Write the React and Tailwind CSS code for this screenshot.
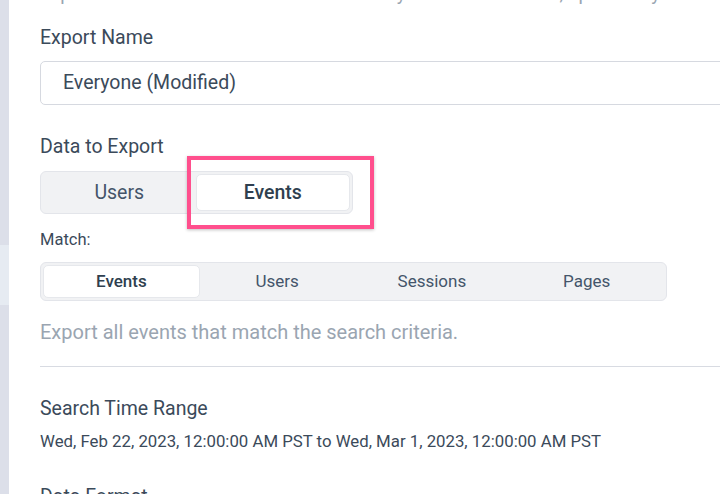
import React from "react";

const font = { fontFamily: "Roboto, 'Liberation Sans', sans-serif" };

function Segment({ items, active, className, itemClass }) {
  return (
    <div className={"flex rounded-md border border-[#e3e5ea] bg-[#f1f2f4] p-[2px] " + className}>
      {items.map((it) => (
        <div
          key={it}
          className={
            "flex flex-1 items-center justify-center rounded-[5px] " +
            itemClass +
            (it === active
              ? " bg-white font-medium text-[#2f3f4f] border border-[#e6e8ec]"
              : " text-[#44556a]")
          }
        >
          {it}
        </div>
      ))}
    </div>
  );
}

export default function App() {
  return (
    <div className="flex h-[494px] w-[720px] overflow-hidden bg-white" style={font}>
      {/* left rail */}
      <div className="flex w-[9px] shrink-0 flex-col bg-[#dcdfe9]">
        <div className="h-[245px]" />
        <div className="h-[60px] bg-[#e6ebf2]" />
      </div>

      <div className="flex-1 pl-[31px] text-[#3b4a5a]">
        <p className="-mt-[18px] whitespace-nowrap text-[19px] leading-[24px] text-[#9aa5b1]">
          Export a list of events or users that match your current search, up to a day or a week of data.
        </p>

        <div className="mt-[20px] text-[19.5px] leading-[24px]">Export Name</div>
        <div className="mt-[11px] -mr-4 flex h-[44px] items-center rounded-[5px] border border-[#d6d9e0] pl-[22px] text-[19.5px] text-[#3b4a5a]">
          Everyone (Modified)
        </div>

        <div className="mt-[30px] text-[19.5px] leading-[24px]">Data to Export</div>
        <div className="relative mt-[12px] w-[313px]">
          <Segment
            items={["Users", "Events"]}
            active="Events"
            className="h-[43px]"
            itemClass="text-[19.5px]"
          />
          <div className="pointer-events-none absolute left-[147px] top-[-15px] h-[73px] w-[187px] border-[4px] border-[#ff4f8d] shadow-[0_1px_3px_rgba(0,0,0,0.25)]" />
        </div>

        <div className="mt-[16px] text-[16.5px] leading-[20px]">Match:</div>
        <Segment
          items={["Events", "Users", "Sessions", "Pages"]}
          active="Events"
          className="mt-[12px] h-[39px] w-[627px]"
          itemClass="text-[17px]"
        />

        <div className="mt-[19px] text-[20px] leading-[24px] text-[#9aa5b1]">
          Export all events that match the search criteria.
        </div>

        <div className="mt-[22px] h-px bg-[#d8dbe2]" />

        <div className="mt-[30px] text-[19.5px] leading-[24px]">Search Time Range</div>
        <div className="mt-[10px] text-[16.8px] leading-[20px]">
          Wed, Feb 22, 2023, 12:00:00 AM PST to Wed, Mar 1, 2023, 12:00:00 AM PST
        </div>

        <div className="mt-[34px] text-[19.5px] leading-[24px]">Data Format</div>
      </div>
    </div>
  );
}
